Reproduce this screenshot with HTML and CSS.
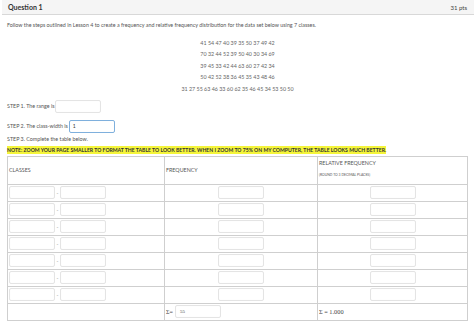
FILE: index.html
```html
<!DOCTYPE html>
<html>
<head>
<meta charset="utf-8">
<link rel="stylesheet" href="styles.css">
</head>
<body>
<div class="qhead"><span class="qtitle">Question 1</span><span class="pts">31 pts</span></div>
<div class="qbody">
  <p class="intro">Follow the steps outlined in Lesson 4 to create a frequency and relative frequency distribution for the data set below using 7 classes.</p>
  <div class="data">
    <div>41 54 47 40 39 35 50 37 49 42</div>
    <div>70 32 44 52 39 50 40 30 34 69</div>
    <div>39 45 33 42 44 63 60 27 42 34</div>
    <div>50 42 52 38 36 45 35 43 48 46</div>
    <div>31 27 55 63 46 33 60 62 35 46 45 34 53 50 50</div>
  </div>
  <div class="step s1">STEP 1. The range is <span class="inp"></span></div>
  <div class="step s2">STEP 2. The class-width is <span class="inp focus">1</span></div>
  <div class="step s3">STEP 3. Complete the table below.</div>
  <div class="note"><span class="hl">NOTE: ZOOM YOUR PAGE SMALLER TO FORMAT THE TABLE TO LOOK BETTER. WHEN I ZOOM TO 75% ON MY COMPUTER, THE TABLE LOOKS MUCH BETTER.</span></div>
  <table class="freq">
    <tr class="hrow">
      <td class="c1">CLASSES</td>
      <td class="c2">FREQUENCY</td>
      <td class="c3"><div>RELATIVE FREQUENCY</div><div class="small">(ROUND TO 3 DECIMAL PLACES)</div></td>
    </tr>
    <tr><td class="cls"><span class="inp"></span><span class="dash">-</span><span class="inp"></span></td><td class="mid"><span class="inp"></span></td><td class="mid"><span class="inp"></span></td></tr>
    <tr><td class="cls"><span class="inp"></span><span class="dash">-</span><span class="inp"></span></td><td class="mid"><span class="inp"></span></td><td class="mid"><span class="inp"></span></td></tr>
    <tr><td class="cls"><span class="inp"></span><span class="dash">-</span><span class="inp"></span></td><td class="mid"><span class="inp"></span></td><td class="mid"><span class="inp"></span></td></tr>
    <tr><td class="cls"><span class="inp"></span><span class="dash">-</span><span class="inp"></span></td><td class="mid"><span class="inp"></span></td><td class="mid"><span class="inp"></span></td></tr>
    <tr><td class="cls"><span class="inp"></span><span class="dash">-</span><span class="inp"></span></td><td class="mid"><span class="inp"></span></td><td class="mid"><span class="inp"></span></td></tr>
    <tr><td class="cls"><span class="inp"></span><span class="dash">-</span><span class="inp"></span></td><td class="mid"><span class="inp"></span></td><td class="mid"><span class="inp"></span></td></tr>
    <tr><td class="cls"><span class="inp"></span><span class="dash">-</span><span class="inp"></span></td><td class="mid"><span class="inp"></span></td><td class="mid"><span class="inp"></span></td></tr>
    <tr class="sum"><td></td><td class="sumc"><span class="sig">Σ=</span><span class="inp serif">55</span></td><td class="sumc"><span class="sig big">Σ = 1.000</span></td></tr>
  </table>
</div>
</body>
</html>
```
FILE: styles.css
```css
html, body { margin: 0; padding: 0; background: #fff; }
body { font-family: Lato, "Open Sans", sans-serif; color: #555; font-size: 5.35px; width: 474px; height: 324px; overflow: hidden; }
.qhead { height: 14px; background: #f5f5f5; border-bottom: 1px solid #d8d8d8; display: flex; justify-content: space-between; align-items: center; padding: 0 7px 0 6px; margin-left: 2px; font-size: 7px; color: #333; }
.qtitle { font-weight: bold; }
.pts { font-size: 6px; color: #444; }
.qbody { padding: 0 6px 0 7px; }
.intro { margin: 0; height: 11px; padding-top: 8px; line-height: 5px; }
.data { text-align: center; color: #666; padding-top: 7px; }
.data div { height: 11.4px; line-height: 5px; }
.step { display: flex; align-items: center; height: 13px; }
.s1 { margin-top: 2px; }
.s2 { margin-top: 7px; }
.s3 { margin-top: 4px; height: 5px; }
.inp { display: inline-block; box-sizing: border-box; width: 46px; height: 13px; border: 1px solid #e4e4e4; border-radius: 2px; background: #fff; vertical-align: middle; box-shadow: inset 0 0 1px rgba(0,0,0,0.05); }
.step .inp { margin-left: 1px; }
.inp.focus { border-color: #7fb0dd; font-size: 5px; line-height: 11px; padding-left: 3px; color: #333; }
.note { margin-top: 6px; height: 5px; line-height: 5px; font-weight: bold; color: #333; font-size: 5.12px; }
.hl { background: #f5f53a; padding: 1px 0; }
.freq { margin-top: 3px; border-collapse: collapse; border: 1.5px solid #c0c0c0; width: 461px; table-layout: fixed; }
.freq td { border: 1px solid #cfcfcf; padding: 0 1px; height: 16px; vertical-align: middle; }
.freq .c1 { width: 154px; }
.freq .c2 { width: 150px; }
.hrow td { height: 27px; }
.small { font-size: 3.4px; margin-top: 7px; }
.c3 div:first-child { margin-top: -3px; }
.cls { white-space: nowrap; }
.dash { display: inline-block; width: 5px; text-align: center; vertical-align: middle; color: #999; }
.mid { text-align: center; }
.sumc { white-space: nowrap; font-family: "Liberation Serif", serif; color: #444; }
.sig { font-size: 6px; vertical-align: middle; }
.sig.big { font-size: 6.3px; }
.sumc .inp { margin-left: 2px; font-size: 5px; line-height: 11px; padding-left: 4px; }
```
